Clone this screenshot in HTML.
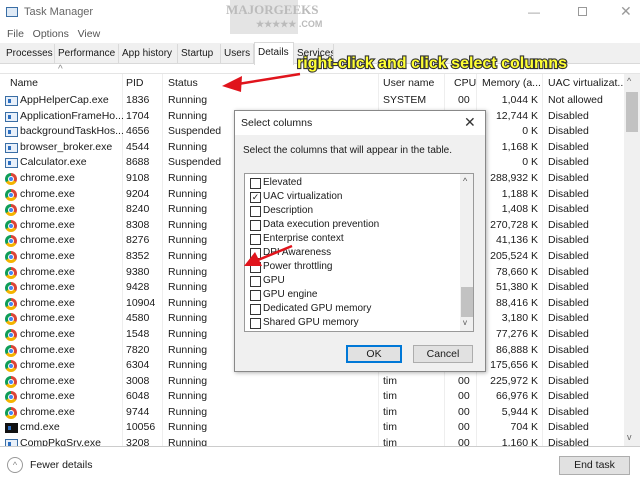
<!DOCTYPE html><html><head><style>
*{margin:0;padding:0;box-sizing:border-box}
body{width:640px;height:486px;overflow:hidden;background:#fff;font-family:"Liberation Sans",sans-serif;font-size:10.5px;color:#1a1a1a;position:relative}
.a{position:absolute;white-space:nowrap}
.tab{position:absolute;top:44px;height:19px;line-height:19px;padding:0 3px;border-right:1px solid #d9d9d9;background:#f0f0f0;font-size:10px;white-space:nowrap;overflow:hidden}
#rows{position:absolute;top:93px;left:0;width:624px}
.r{height:15.6px;line-height:15.6px;position:relative}
.r span{position:absolute;top:0;white-space:nowrap}
.n{left:20px}.p{left:126px}.s{left:168px}.u{left:383px}.c{left:458px}.m{right:86px;text-align:right}.v{left:548px}
.ic{left:5px;top:3px!important;width:13px;height:10px;border:1px solid #3a6ea5;background:#e8f0fa}
.ic::after{content:"";position:absolute;left:2px;top:2px;width:3px;height:4px;background:#2d6fc0}
.ch{left:5px;top:2px!important;width:12px;height:12px;border-radius:50%;background:conic-gradient(#db4437 0 33%,#f4b400 0 66%,#0f9d58 0 100%)}
.ch::after{content:"";position:absolute;left:3px;top:3px;width:6px;height:6px;border-radius:50%;background:#4285f4;border:1px solid #fff;box-sizing:border-box}
.sep{position:absolute;top:74px;width:1px;height:372px;background:#eee}
.cb{position:absolute;left:5px;width:11px;height:11px;border:1px solid #333;background:#fff}
.it{position:absolute;left:18px;font-size:10px}
.btn{position:absolute;height:18px;line-height:16px;text-align:center;border:1px solid #adadad;background:#e1e1e1;font-size:10.5px}
</style></head><body>
<div class="a" style="left:6px;top:7px;width:12px;height:10px;border:1px solid #3a6ea5;background:#dfeaf6"></div>
<div class="a" style="left:24px;top:6px;color:#666;font-size:11px">Task Manager</div>
<div class="a" style="left:230px;top:0;width:68px;height:34px;background:#d9d9d9;opacity:.7"></div>
<div class="a" style="left:226px;top:2px;font:bold 13px 'Liberation Serif',serif;color:#bbb">MAJORGEEKS</div>
<div class="a" style="left:256px;top:19px;font:bold 9px 'Liberation Sans',sans-serif;color:#bbb">★★★★★ .COM</div>
<div class="a" style="left:528px;top:5px;color:#999;font-size:12px">—</div>
<div class="a" style="left:578px;top:7px;width:9px;height:9px;border:1px solid #999"></div>
<div class="a" style="left:620px;top:3px;color:#999;font-size:14px">✕</div>
<div class="a" style="left:7px;top:28px;color:#555">File&nbsp;&nbsp; Options&nbsp;&nbsp; View</div>
<div class="a" style="left:0;top:43px;width:640px;height:21px;background:#f0f0f0;border-bottom:1px solid #d9d9d9"></div>
<div class="tab" style="left:3px;width:52px">Processes</div>
<div class="tab" style="left:55px;width:64px">Performance</div>
<div class="tab" style="left:119px;width:59px">App history</div>
<div class="tab" style="left:178px;width:43px">Startup</div>
<div class="tab" style="left:221px;width:33px">Users</div>
<div class="tab" style="left:254px;width:40px;top:42px;height:23px;background:#fff;border:1px solid #d9d9d9;border-bottom:none">Details</div>
<div class="tab" style="left:294px;width:40px">Services</div>
<div class="a" style="left:0;top:73px;width:640px;height:1px;background:#e5e5e5"></div>
<div class="a" style="left:58px;top:64px;color:#888;font-size:10px">^</div>
<div class="a" style="left:10px;top:77px">Name</div>
<div class="a" style="left:126px;top:77px">PID</div>
<div class="a" style="left:168px;top:77px">Status</div>
<div class="a" style="left:383px;top:77px">User name</div>
<div class="a" style="left:454px;top:77px">CPU</div>
<div class="a" style="left:482px;top:77px">Memory (a...</div>
<div class="a" style="left:548px;top:77px">UAC virtualizat...</div>
<div class="sep" style="left:122px"></div><div class="sep" style="left:162px"></div><div class="sep" style="left:378px"></div><div class="sep" style="left:444px"></div><div class="sep" style="left:476px"></div><div class="sep" style="left:542px"></div>
<div class="a" style="left:624px;top:74px;width:16px;height:372px;background:#f0f0f0"></div>
<div class="a" style="left:626px;top:92px;width:12px;height:40px;background:#c2c2c2"></div>
<div class="a" style="left:627px;top:76px;color:#666;font-size:9px">^</div>
<div class="a" style="left:627px;top:432px;color:#666;font-size:9px">v</div>
<div id="rows">
<div class="r"><span class="ic"></span><span class="n">AppHelperCap.exe</span><span class="p">1836</span><span class="s">Running</span><span class="u">SYSTEM</span><span class="c">00</span><span class="m">1,044 K</span><span class="v">Not allowed</span></div>
<div class="r"><span class="ic"></span><span class="n">ApplicationFrameHo...</span><span class="p">1704</span><span class="s">Running</span><span class="u">tim</span><span class="c">00</span><span class="m">12,744 K</span><span class="v">Disabled</span></div>
<div class="r"><span class="ic"></span><span class="n">backgroundTaskHos...</span><span class="p">4656</span><span class="s">Suspended</span><span class="u">tim</span><span class="c">00</span><span class="m">0 K</span><span class="v">Disabled</span></div>
<div class="r"><span class="ic"></span><span class="n">browser_broker.exe</span><span class="p">4544</span><span class="s">Running</span><span class="u">tim</span><span class="c">00</span><span class="m">1,168 K</span><span class="v">Disabled</span></div>
<div class="r"><span class="ic"></span><span class="n">Calculator.exe</span><span class="p">8688</span><span class="s">Suspended</span><span class="u">tim</span><span class="c">00</span><span class="m">0 K</span><span class="v">Disabled</span></div>
<div class="r"><span class="ch"></span><span class="n">chrome.exe</span><span class="p">9108</span><span class="s">Running</span><span class="u">tim</span><span class="c">00</span><span class="m">288,932 K</span><span class="v">Disabled</span></div>
<div class="r"><span class="ch"></span><span class="n">chrome.exe</span><span class="p">9204</span><span class="s">Running</span><span class="u">tim</span><span class="c">00</span><span class="m">1,188 K</span><span class="v">Disabled</span></div>
<div class="r"><span class="ch"></span><span class="n">chrome.exe</span><span class="p">8240</span><span class="s">Running</span><span class="u">tim</span><span class="c">00</span><span class="m">1,408 K</span><span class="v">Disabled</span></div>
<div class="r"><span class="ch"></span><span class="n">chrome.exe</span><span class="p">8308</span><span class="s">Running</span><span class="u">tim</span><span class="c">00</span><span class="m">270,728 K</span><span class="v">Disabled</span></div>
<div class="r"><span class="ch"></span><span class="n">chrome.exe</span><span class="p">8276</span><span class="s">Running</span><span class="u">tim</span><span class="c">00</span><span class="m">41,136 K</span><span class="v">Disabled</span></div>
<div class="r"><span class="ch"></span><span class="n">chrome.exe</span><span class="p">8352</span><span class="s">Running</span><span class="u">tim</span><span class="c">00</span><span class="m">205,524 K</span><span class="v">Disabled</span></div>
<div class="r"><span class="ch"></span><span class="n">chrome.exe</span><span class="p">9380</span><span class="s">Running</span><span class="u">tim</span><span class="c">00</span><span class="m">78,660 K</span><span class="v">Disabled</span></div>
<div class="r"><span class="ch"></span><span class="n">chrome.exe</span><span class="p">9428</span><span class="s">Running</span><span class="u">tim</span><span class="c">00</span><span class="m">51,380 K</span><span class="v">Disabled</span></div>
<div class="r"><span class="ch"></span><span class="n">chrome.exe</span><span class="p">10904</span><span class="s">Running</span><span class="u">tim</span><span class="c">00</span><span class="m">88,416 K</span><span class="v">Disabled</span></div>
<div class="r"><span class="ch"></span><span class="n">chrome.exe</span><span class="p">4580</span><span class="s">Running</span><span class="u">tim</span><span class="c">00</span><span class="m">3,180 K</span><span class="v">Disabled</span></div>
<div class="r"><span class="ch"></span><span class="n">chrome.exe</span><span class="p">1548</span><span class="s">Running</span><span class="u">tim</span><span class="c">00</span><span class="m">77,276 K</span><span class="v">Disabled</span></div>
<div class="r"><span class="ch"></span><span class="n">chrome.exe</span><span class="p">7820</span><span class="s">Running</span><span class="u">tim</span><span class="c">00</span><span class="m">86,888 K</span><span class="v">Disabled</span></div>
<div class="r"><span class="ch"></span><span class="n">chrome.exe</span><span class="p">6304</span><span class="s">Running</span><span class="u">tim</span><span class="c">00</span><span class="m">175,656 K</span><span class="v">Disabled</span></div>
<div class="r"><span class="ch"></span><span class="n">chrome.exe</span><span class="p">3008</span><span class="s">Running</span><span class="u">tim</span><span class="c">00</span><span class="m">225,972 K</span><span class="v">Disabled</span></div>
<div class="r"><span class="ch"></span><span class="n">chrome.exe</span><span class="p">6048</span><span class="s">Running</span><span class="u">tim</span><span class="c">00</span><span class="m">66,976 K</span><span class="v">Disabled</span></div>
<div class="r"><span class="ch"></span><span class="n">chrome.exe</span><span class="p">9744</span><span class="s">Running</span><span class="u">tim</span><span class="c">00</span><span class="m">5,944 K</span><span class="v">Disabled</span></div>
<div class="r"><span class="ic" style="background:#111;border-color:#111"></span><span class="n">cmd.exe</span><span class="p">10056</span><span class="s">Running</span><span class="u">tim</span><span class="c">00</span><span class="m">704 K</span><span class="v">Disabled</span></div>
<div class="r"><span class="ic"></span><span class="n">CompPkgSrv.exe</span><span class="p">3208</span><span class="s">Running</span><span class="u">tim</span><span class="c">00</span><span class="m">1,160 K</span><span class="v">Disabled</span></div>
</div>
<div class="a" style="left:0;top:446px;width:640px;height:40px;background:#fff;border-top:1px solid #ccc"></div>
<div class="a" style="left:7px;top:457px;width:16px;height:16px;border:1px solid #999;border-radius:50%;text-align:center;font-size:9px;line-height:14px;color:#888">^</div>
<div class="a" style="left:30px;top:459px">Fewer details</div>
<div class="btn" style="left:559px;top:456px;width:71px;height:19px;line-height:17px">End task</div>
<div class="a" style="left:234px;top:110px;width:252px;height:262px;background:#f0f0f0;border:1px solid #888;box-shadow:1px 1px 4px rgba(0,0,0,.3)"></div>
<div class="a" style="left:235px;top:111px;width:250px;height:24px;background:#fff"></div>
<div class="a" style="left:241px;top:117px;font-size:10.5px">Select columns</div>
<div class="a" style="left:464px;top:114px;font-size:14px;color:#333">✕</div>
<div class="a" style="left:243px;top:145px;font-size:10px">Select the columns that will appear in the table.</div>
<div class="a" style="left:244px;top:173px;width:230px;height:159px;background:#fff;border:1px solid #999;overflow:hidden">
<div class="cb" style="top:4px"></div><div class="it" style="top:3px">Elevated</div>
<div class="cb" style="top:18px;text-align:center;font-size:9px;line-height:9px">✓</div><div class="it" style="top:17px">UAC virtualization</div>
<div class="cb" style="top:32px"></div><div class="it" style="top:31px">Description</div>
<div class="cb" style="top:46px"></div><div class="it" style="top:45px">Data execution prevention</div>
<div class="cb" style="top:60px"></div><div class="it" style="top:59px">Enterprise context</div>
<div class="cb" style="top:74px"></div><div class="it" style="top:73px">DPI Awareness</div>
<div class="cb" style="top:88px"></div><div class="it" style="top:87px">Power throttling</div>
<div class="cb" style="top:102px"></div><div class="it" style="top:101px">GPU</div>
<div class="cb" style="top:116px"></div><div class="it" style="top:115px">GPU engine</div>
<div class="cb" style="top:130px"></div><div class="it" style="top:129px">Dedicated GPU memory</div>
<div class="cb" style="top:144px"></div><div class="it" style="top:143px">Shared GPU memory</div>
<div class="a" style="left:215px;top:0;width:14px;height:157px;background:#f0f0f0"></div>
<div class="a" style="left:216px;top:113px;width:12px;height:30px;background:#c2c2c2"></div>
<div class="a" style="left:218px;top:2px;font-size:9px;color:#555">^</div>
<div class="a" style="left:218px;top:144px;font-size:8px;color:#555">v</div>
</div>
<div class="btn" style="left:346px;top:345px;width:56px;border:1px solid #0078d7;box-shadow:inset 0 0 0 1px #0078d7">OK</div>
<div class="btn" style="left:413px;top:345px;width:60px">Cancel</div>
<svg class="a" style="left:0;top:0" width="640" height="486">
<line x1="300" y1="74" x2="238" y2="84" stroke="#e0141c" stroke-width="2.5"/>
<polygon points="222,86 242,76 241,92" fill="#e0141c"/>
<line x1="292" y1="246" x2="258" y2="260" stroke="#e0141c" stroke-width="2.5"/>
<polygon points="244,266 255,252 262,266" fill="#e0141c"/>
<text x="297" y="68" font-family="Liberation Sans" font-weight="bold" font-size="16" textLength="270" fill="#ffff33" stroke="#333" stroke-width="2.2" paint-order="stroke">right-click and click select columns</text>
</svg>
</body></html>
